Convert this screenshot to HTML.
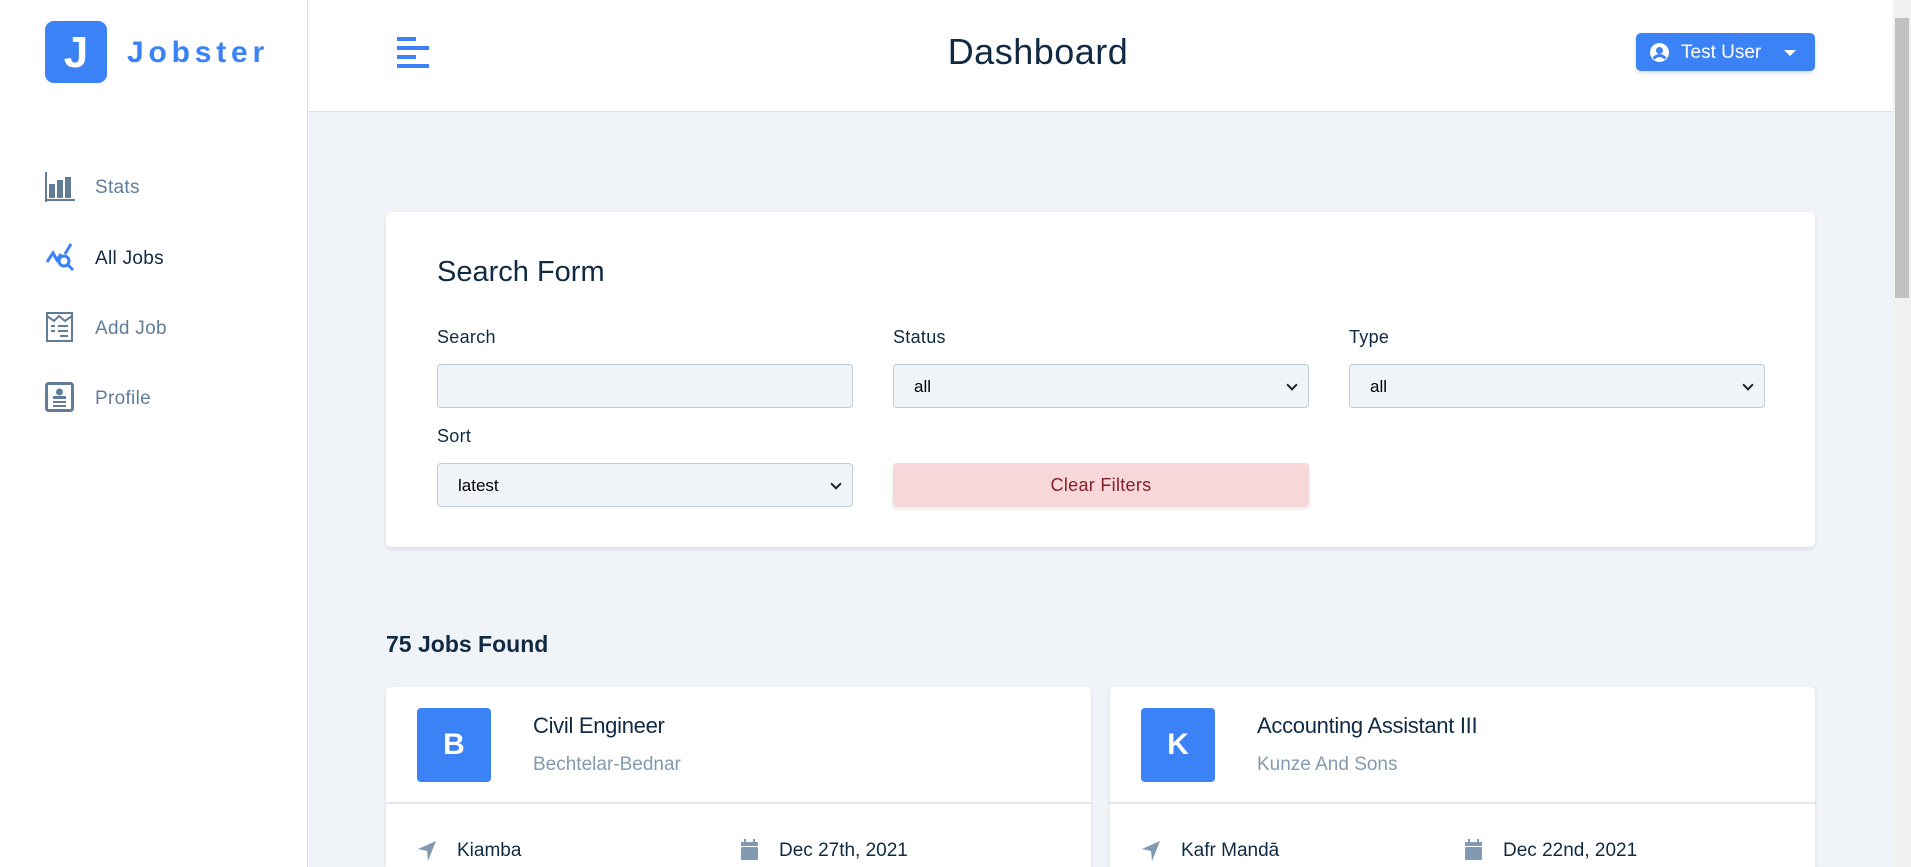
<!DOCTYPE html>
<html style="overflow:hidden"><head><meta charset="utf-8"><style>
*{box-sizing:border-box;margin:0;padding:0}
html,body{width:1911px;height:867px;overflow:hidden}
body{background:#f0f4f8;font-family:"Liberation Sans",sans-serif;color:#102a43;position:relative}
.abs{position:absolute}
.side{left:0;top:0;width:308px;height:867px;background:#fff;border-right:1px solid #d9e2ec}
.head{left:308px;top:0;width:1585px;height:112px;background:#fff;border-bottom:1px solid #d9e2ec}
.logo{left:45px;top:21px;width:62px;height:62px;background:#3b82f6;border-radius:9px;color:#fff;font-weight:bold;font-size:44px;text-align:center;line-height:64px}
.brand{left:127px;top:36px;font-size:30px;font-weight:bold;color:#3b82f6;letter-spacing:4.8px}
.nav{left:95px;font-size:19px;color:#627d98;letter-spacing:.3px}
.card{background:#fff;border-radius:5px;box-shadow:0 2px 4px rgba(0,0,0,.1)}
.lbl{font-size:18px;letter-spacing:.3px}
.inp{height:44px;width:416px;background:#f0f4f8;border:1px solid #bcccdc;border-radius:4px;font-size:17px;padding:12px 20px;color:#000}
.chev{position:absolute;right:12px;top:16px;width:8px;height:8px;border-right:2px solid #222;border-bottom:2px solid #222;transform:rotate(45deg)}
.av{width:74px;height:74px;background:#3b82f6;border-radius:4px;color:#fff;font-size:30px;font-weight:bold;text-align:center;line-height:74px}
.jt{font-size:22px;letter-spacing:-.3px}
.co{font-size:19px;color:#829ab1;letter-spacing:0}
.ft{font-size:19px;letter-spacing:0}
</style></head><body>
<div class="abs side"></div>
<div class="abs head"></div>
<div class="abs logo">J</div>
<div class="abs brand">Jobster</div>
<svg class="abs" style="left:397px;top:37px" width="33" height="32"><rect x="0" y="0" width="19" height="4" fill="#3b82f6"/><rect x="0" y="9" width="32" height="4" fill="#3b82f6"/><rect x="0" y="18" width="19" height="4" fill="#3b82f6"/><rect x="0" y="27" width="32" height="4" fill="#3b82f6"/></svg>
<div class="abs" style="left:900px;width:276px;text-align:center;top:31px;font-size:36px;letter-spacing:0.5px">Dashboard</div>
<div class="abs" style="left:1636px;top:33px;width:179px;height:38px;background:#3b82f6;border-radius:5px;box-shadow:0 2px 4px rgba(0,0,0,.15);color:#fff;font-size:19px;line-height:39px;padding-left:45px">Test User</div>
<svg class="abs" style="left:1650px;top:43px" width="19" height="19"><circle cx="9.5" cy="9.5" r="9.5" fill="#fff"/><circle cx="9.5" cy="7.5" r="3.5" fill="#3b82f6"/><path d="M3.5 15.5 Q9.5 9.5 15.5 15.5" stroke="#3b82f6" stroke-width="3" fill="none"/></svg>
<div class="abs" style="left:1784px;top:50px;border-left:6px solid transparent;border-right:6px solid transparent;border-top:6px solid #fff"></div>
<div class="abs" style="left:1893px;top:0;width:18px;height:867px;background:#f1f1f1"></div>
<div class="abs" style="left:1895px;top:18px;width:14px;height:280px;background:#c1c1c1"></div>
<!-- nav -->
<svg class="abs" style="left:45px;top:172px" width="30" height="30" fill="#627d98"><rect x="0" y="0" width="2" height="30"/><rect x="0" y="27" width="30" height="2"/><rect x="4" y="12" width="6" height="14"/><rect x="12" y="8" width="6" height="18"/><rect x="20" y="5" width="6" height="21"/></svg>
<div class="abs nav" style="top:177px">Stats</div>
<svg class="abs" style="left:45px;top:242px" width="30" height="30" fill="none" stroke="#3b82f6" stroke-width="3"><path d="M2 20 L8 11 L12 18 L16 12"/><path d="M26 2 L20 12"/><circle cx="19" cy="19" r="5"/><path d="M23 23 L28 28"/></svg>
<div class="abs nav" style="top:248px;color:#102a43">All Jobs</div>
<svg class="abs" style="left:46px;top:312px" width="28" height="30" fill="none" stroke="#627d98" stroke-width="2"><rect x="1" y="1" width="25" height="28"/><path d="M1 4 L8 9 L13 4 L19 9 L26 4"/><path d="M5 14 H9 M12 14 H22 M5 19 H9 M12 19 H22 M14 24 H22"/></svg>
<div class="abs nav" style="top:318px">Add Job</div>
<svg class="abs" style="left:45px;top:382px" width="29" height="30"><rect x="1.5" y="1.5" width="26" height="27" rx="2" fill="none" stroke="#627d98" stroke-width="3"/><circle cx="14.5" cy="10" r="3.5" fill="#627d98"/><rect x="8" y="14" width="13" height="3" fill="#627d98"/><rect x="8" y="19" width="13" height="2" fill="#627d98"/><rect x="8" y="23" width="13" height="2" fill="#627d98"/></svg>
<div class="abs nav" style="top:388px">Profile</div>
<!-- search form -->
<div class="abs card" style="left:386px;top:212px;width:1429px;height:335px"></div>
<div class="abs" style="left:437px;top:256px;font-size:29px;letter-spacing:0">Search Form</div>
<div class="abs lbl" style="left:437px;top:327px">Search</div>
<div class="abs lbl" style="left:893px;top:327px">Status</div>
<div class="abs lbl" style="left:1349px;top:327px">Type</div>
<div class="abs inp" style="left:437px;top:364px"></div>
<div class="abs inp" style="left:893px;top:364px">all<span class="chev"></span></div>
<div class="abs inp" style="left:1349px;top:364px">all<span class="chev"></span></div>
<div class="abs lbl" style="left:437px;top:426px">Sort</div>
<div class="abs inp" style="left:437px;top:463px">latest<span class="chev"></span></div>
<div class="abs" style="left:893px;top:463px;width:416px;height:44px;background:#f8d7da;border-radius:4px;box-shadow:0 2px 4px rgba(0,0,0,.1);color:#842029;font-size:18px;text-align:center;line-height:45px;letter-spacing:.3px">Clear Filters</div>
<div class="abs" style="left:386px;top:631px;font-size:23px;font-weight:bold;letter-spacing:0">75 Jobs Found</div>
<!-- job cards -->
<div class="abs card" style="left:386px;top:687px;width:705px;height:180px;border-radius:5px 5px 0 0"></div>
<div class="abs card" style="left:1110px;top:687px;width:705px;height:180px;border-radius:5px 5px 0 0"></div>
<div class="abs" style="left:386px;top:802px;width:705px;height:2px;background:#e0e8f0"></div>
<div class="abs" style="left:1110px;top:802px;width:705px;height:2px;background:#e0e8f0"></div>
<div class="abs av" style="left:417px;top:708px">B</div>
<div class="abs av" style="left:1141px;top:708px">K</div>
<div class="abs jt" style="left:533px;top:713px">Civil Engineer</div>
<div class="abs co" style="left:533px;top:754px">Bechtelar-Bednar</div>
<div class="abs jt" style="left:1257px;top:713px">Accounting Assistant III</div>
<div class="abs co" style="left:1257px;top:754px">Kunze And Sons</div>
<svg class="abs" style="left:417px;top:840px" width="20" height="22"><path d="M1 9 L19 1 L11 21 L10 11 Z" fill="#829ab1"/></svg>
<div class="abs ft" style="left:457px;top:840px">Kiamba</div>
<svg class="abs" style="left:741px;top:839px" width="17" height="21" fill="#829ab1"><rect x="3" y="0" width="2" height="4"/><rect x="12" y="0" width="2" height="4"/><rect x="0" y="3" width="17" height="4"/><rect x="0" y="8" width="17" height="13" rx="1"/></svg>
<div class="abs ft" style="left:779px;top:840px">Dec 27th, 2021</div>
<svg class="abs" style="left:1141px;top:840px" width="20" height="22"><path d="M1 9 L19 1 L11 21 L10 11 Z" fill="#829ab1"/></svg>
<div class="abs ft" style="left:1181px;top:840px">Kafr Mandā</div>
<svg class="abs" style="left:1465px;top:839px" width="17" height="21" fill="#829ab1"><rect x="3" y="0" width="2" height="4"/><rect x="12" y="0" width="2" height="4"/><rect x="0" y="3" width="17" height="4"/><rect x="0" y="8" width="17" height="13" rx="1"/></svg>
<div class="abs ft" style="left:1503px;top:840px">Dec 22nd, 2021</div>
</body></html>
